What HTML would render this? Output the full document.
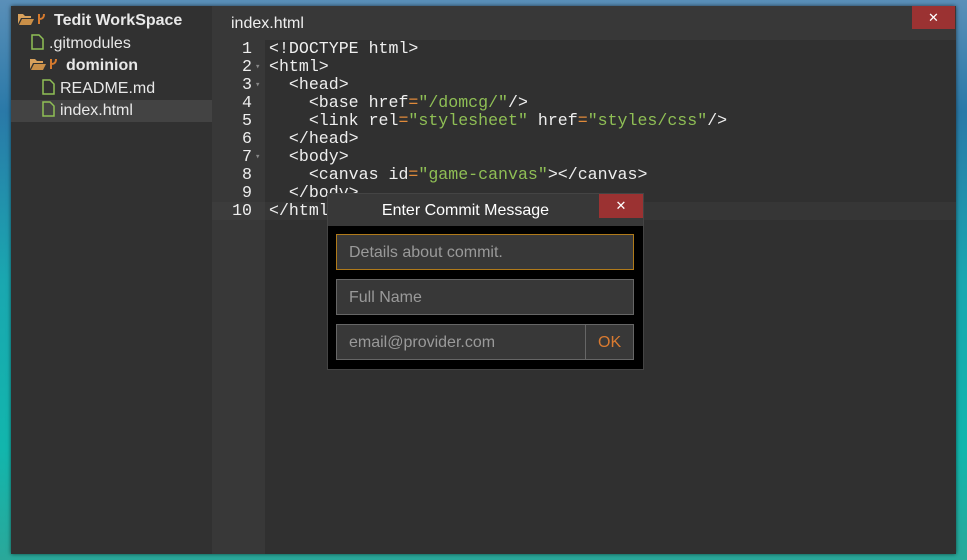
<!DOCTYPE html>
<html><head><style>
body{margin:0;width:967px;height:560px;overflow:hidden;position:relative;
background:linear-gradient(180deg,#5a8fb8 0%,#2a79a8 20%,#1aa7b0 50%,#12b6ad 80%,#2aa89a 100%);font-family:"Liberation Sans",sans-serif;}
.win{position:absolute;left:11px;top:6px;width:945px;height:548px;background:#303030;box-shadow:0 0 4px rgba(0,0,0,.6);}
.side{position:absolute;left:0;top:0;width:201px;height:548px;background:#313131;}
.item{position:absolute;left:0;width:201px;height:22px;line-height:22px;color:#e8e8e8;font-size:16px;white-space:nowrap}
.item svg{margin-right:3px}
.title{position:absolute;left:201px;top:0;width:744px;height:34px;background:#383838;}
.title span{position:absolute;left:19px;top:9px;color:#eee;font-size:16px}
.close{position:absolute;left:901px;top:0;width:43px;height:23px;background:#9b3232;color:#fff;text-align:center;line-height:23px;font-size:13px}
.gut{position:absolute;left:201px;top:34px;width:53px;height:514px;background:#383838;}
.code{position:absolute;left:201px;top:34px;font-family:"Liberation Mono",monospace;font-size:16.6px;}
.ln{position:absolute;left:0;width:744px;height:18px;line-height:18px;color:#eee;white-space:pre}
.ln .n{position:absolute;right:704px;text-align:right;width:40px}
.ln .t{position:absolute;left:57px}
.s{color:#8fbf55}.o{color:#e08a3a}
.fold{position:absolute;left:43px;color:#888;font-size:9px}
.dlg{position:absolute;left:327px;top:193px;width:315px;height:175px;background:#000;border:1px solid #444;}
.dh{height:32px;background:#383838;color:#fff;font-size:16px;line-height:34px;text-align:center;padding-right:40px;position:relative}
.dx{position:absolute;right:0;top:0;width:44px;height:24px;background:#9b3232;color:#fff;font-size:13px;line-height:24px;text-align:center;padding:0}
.in{position:absolute;left:8px;width:296px;height:34px;background:#383838;border:1px solid #666;color:#9a9a9a;font-size:16px;line-height:36px;text-indent:12px}
</style></head><body>
<div class="win">
 <div class="side">
  <div class="item" style="top:4px;font-weight:bold;left:6px"><svg width="34" height="16" style="vertical-align:-2px"><path d="M1 3h5l2 2h6v2H4L1 13z" fill="#d9a15c"/><path d="M2 14l3-6h12l-3 6z" fill="#c98f48"/><path d="M22 3v10M22 8c4 0 5-2 5-5" stroke="#d57a2e" stroke-width="2" fill="none"/></svg>Tedit WorkSpace</div>
  <div class="item" style="top:27px;left:19px"><svg width="16" height="16" style="vertical-align:-2px"><path d="M2 1h7l4 4v10H2z" fill="none" stroke="#8fbf55" stroke-width="1.5"/></svg>.gitmodules</div>
  <div class="item" style="top:49px;left:18px;font-weight:bold"><svg width="34" height="16" style="vertical-align:-2px"><path d="M1 3h5l2 2h6v2H4L1 13z" fill="#d9a15c"/><path d="M2 14l3-6h12l-3 6z" fill="#c98f48"/><path d="M22 3v10M22 8c4 0 5-2 5-5" stroke="#d57a2e" stroke-width="2" fill="none"/></svg>dominion</div>
  <div class="item" style="top:72px;left:30px;width:171px"><svg width="16" height="16" style="vertical-align:-2px"><path d="M2 1h7l4 4v10H2z" fill="none" stroke="#8fbf55" stroke-width="1.5"/></svg>README.md</div>
  <div class="item" style="top:94px;background:#434343;padding-left:30px;width:171px"><svg width="16" height="16" style="vertical-align:-2px"><path d="M2 1h7l4 4v10H2z" fill="none" stroke="#8fbf55" stroke-width="1.5"/></svg>index.html</div>
 </div>
 <div class="title"><span>index.html</span></div>
 <div class="close">✕</div>
 <div class="gut"></div>
 <div class="code">
  <div class="ln" style="top:0px"><span class="n">1</span><span class="t">&lt;!DOCTYPE html&gt;</span></div>
  <div class="ln" style="top:18px"><span class="n">2</span><span class="fold">▾</span><span class="t">&lt;html&gt;</span></div>
  <div class="ln" style="top:36px"><span class="n">3</span><span class="fold">▾</span><span class="t">  &lt;head&gt;</span></div>
  <div class="ln" style="top:54px"><span class="n">4</span><span class="t">    &lt;base href<span class="o">=</span><span class="s">"/domcg/"</span>/&gt;</span></div>
  <div class="ln" style="top:72px"><span class="n">5</span><span class="t">    &lt;link rel<span class="o">=</span><span class="s">"stylesheet"</span> href<span class="o">=</span><span class="s">"styles/css"</span>/&gt;</span></div>
  <div class="ln" style="top:90px"><span class="n">6</span><span class="t">  &lt;/head&gt;</span></div>
  <div class="ln" style="top:108px"><span class="n">7</span><span class="fold">▾</span><span class="t">  &lt;body&gt;</span></div>
  <div class="ln" style="top:126px"><span class="n">8</span><span class="t">    &lt;canvas id<span class="o">=</span><span class="s">"game-canvas"</span>&gt;&lt;/canvas&gt;</span></div>
  <div class="ln" style="top:144px"><span class="n">9</span><span class="t">  &lt;/body&gt;</span></div>
  <div class="ln" style="top:162px;background:#363636"><span class="n" style="background:#3c3c3c;width:53px;right:auto;left:0;padding-right:13px;box-sizing:border-box">10</span><span class="t">&lt;/html&gt;</span></div>
 </div>
</div>
<div class="dlg">
 <div class="dh">Enter Commit Message<div class="dx">✕</div></div>
 <div class="in" style="top:40px;border-color:#b07a1a">Details about commit.</div>
 <div class="in" style="top:85px">Full Name</div>
 <div class="in" style="top:130px">email@provider.com<div style="position:absolute;right:0;top:0;width:47px;height:34px;border-left:1px solid #666;color:#d97a30;text-indent:12px">OK</div></div>
</div>
</body></html>
